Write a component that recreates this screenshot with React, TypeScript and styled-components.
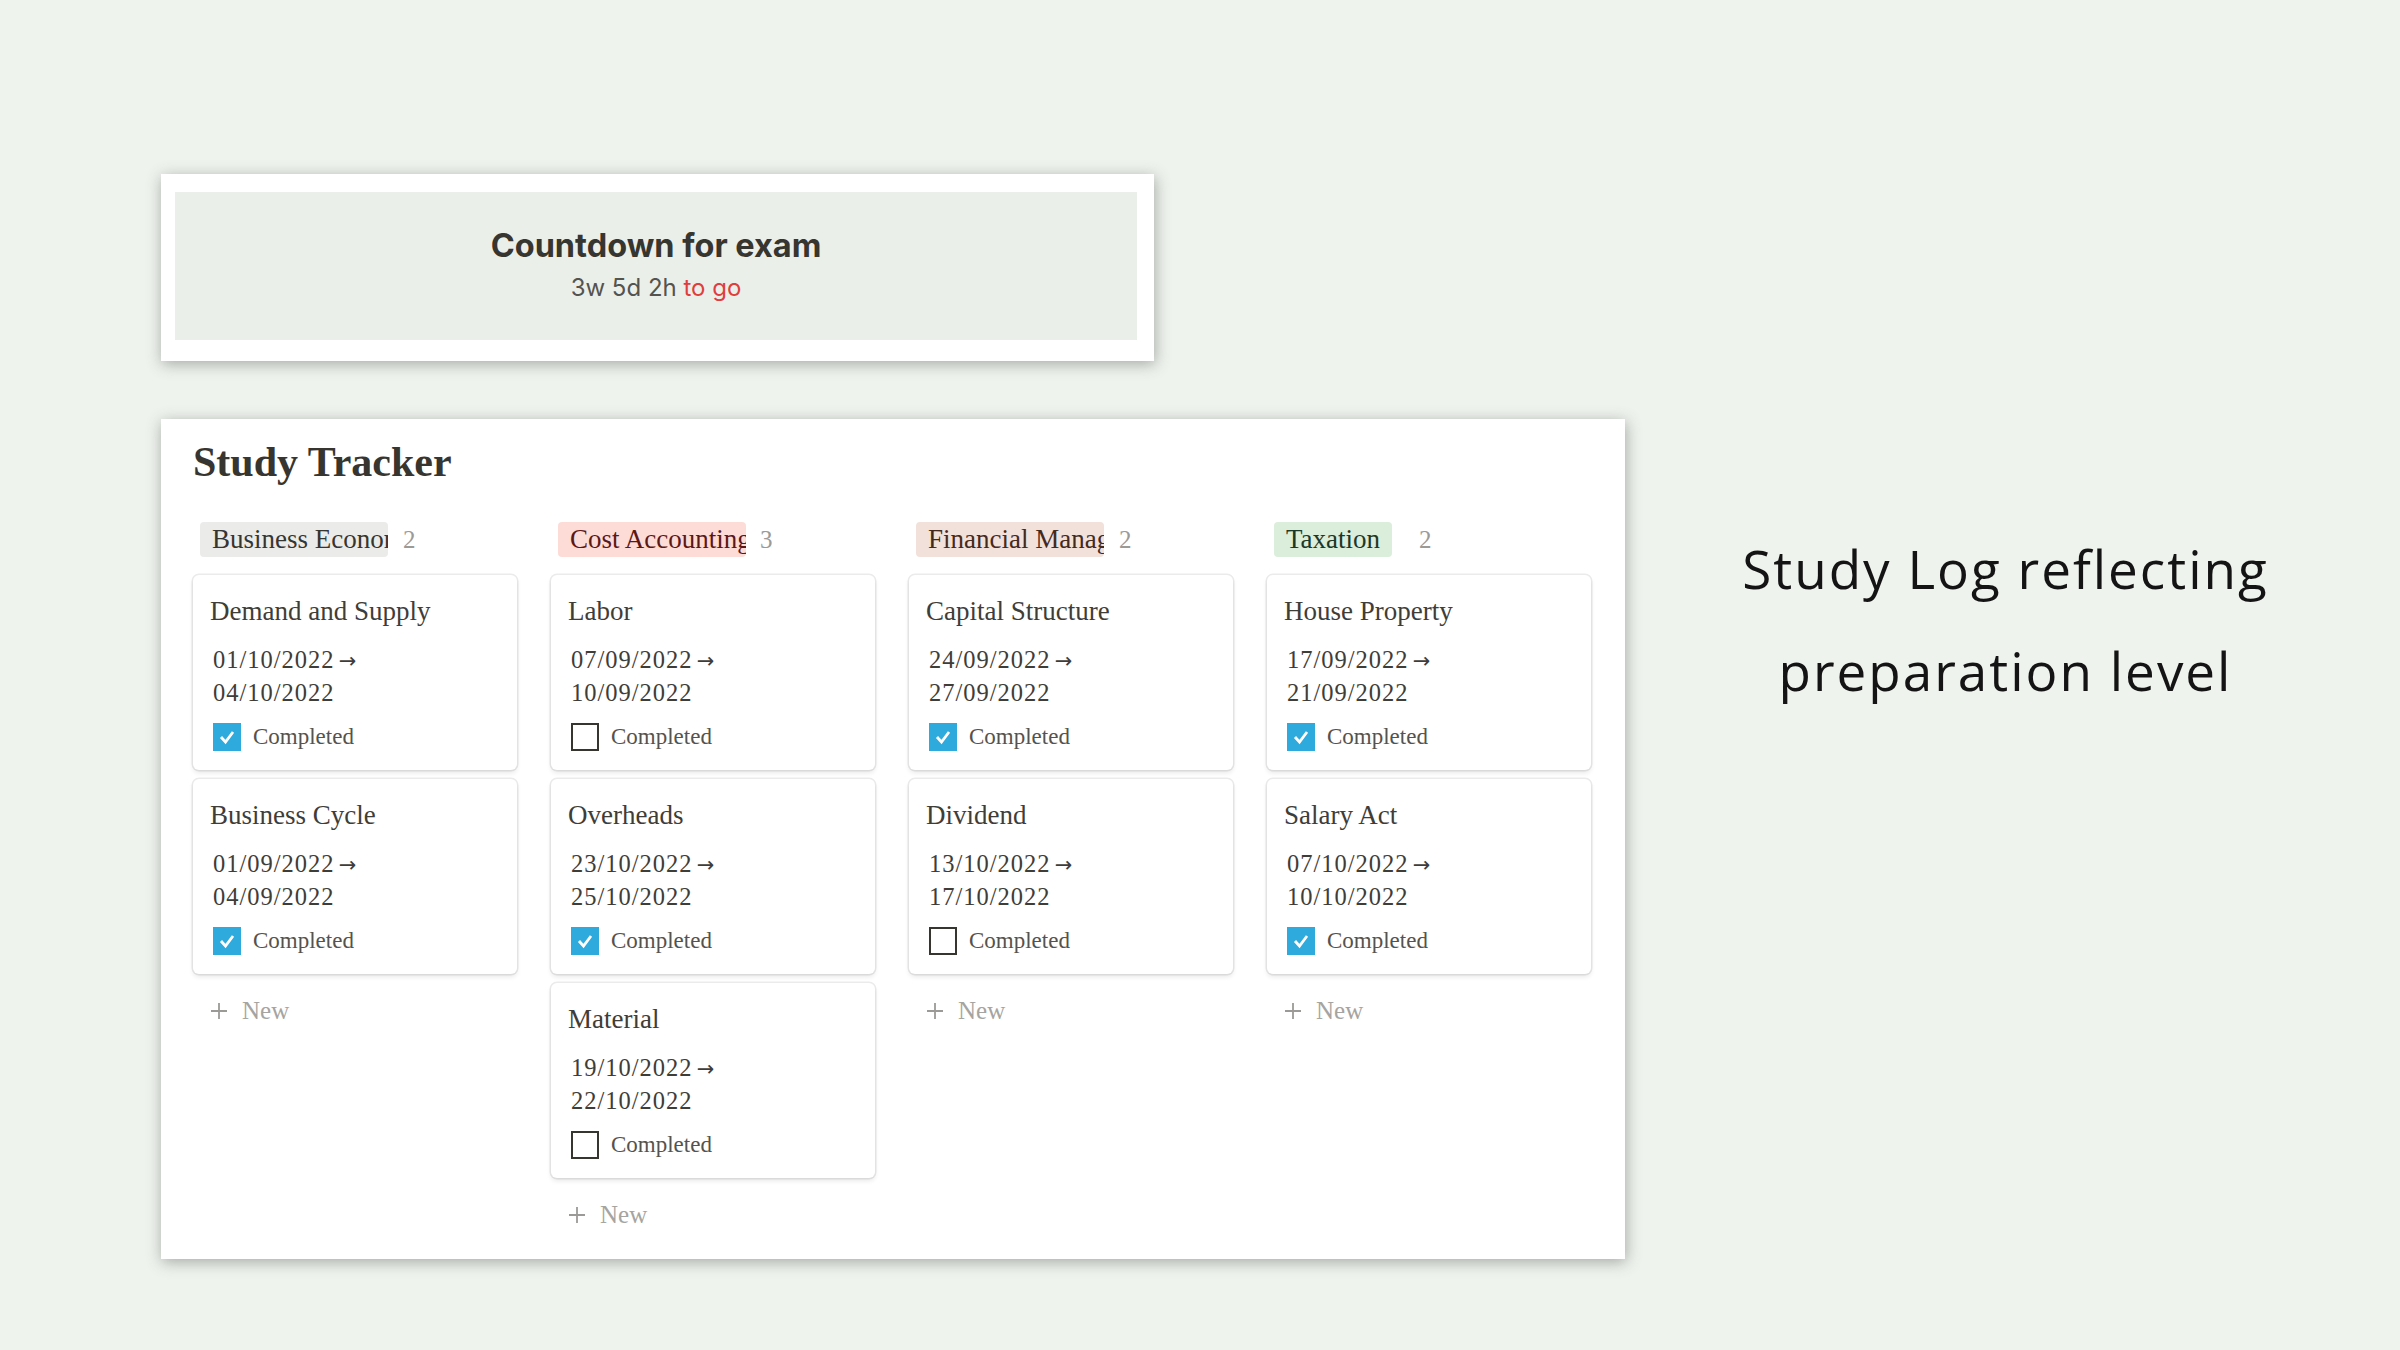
import React from 'react';
import styled, { createGlobalStyle } from 'styled-components';

type Task = { title: string; start: string; end: string; done: boolean };
type Group = {
    name: string;
    bg: string;
    fg: string;
    countGap: number;
    tasks: Task[];
};

const groups: Group[] = [
    {
        name: 'Business Economics',
        bg: '#ebebea',
        fg: '#37352f',
        countGap: 15,
        tasks: [
            { title: 'Demand and Supply', start: '01/10/2022', end: '04/10/2022', done: true },
            { title: 'Business Cycle', start: '01/09/2022', end: '04/09/2022', done: true },
        ],
    },
    {
        name: 'Cost Accounting',
        bg: '#fddcd7',
        fg: '#5d1715',
        countGap: 14,
        tasks: [
            { title: 'Labor', start: '07/09/2022', end: '10/09/2022', done: false },
            { title: 'Overheads', start: '23/10/2022', end: '25/10/2022', done: true },
            { title: 'Material', start: '19/10/2022', end: '22/10/2022', done: false },
        ],
    },
    {
        name: 'Financial Management',
        bg: '#f2e1da',
        fg: '#442a1e',
        countGap: 15,
        tasks: [
            { title: 'Capital Structure', start: '24/09/2022', end: '27/09/2022', done: true },
            { title: 'Dividend', start: '13/10/2022', end: '17/10/2022', done: false },
        ],
    },
    {
        name: 'Taxation',
        bg: '#dbeddb',
        fg: '#1c3829',
        countGap: 27,
        tasks: [
            { title: 'House Property', start: '17/09/2022', end: '21/09/2022', done: true },
            { title: 'Salary Act', start: '07/10/2022', end: '10/10/2022', done: true },
        ],
    },
];

const App = () => (
    <>
        <GlobalStyle />
        <Page>
            <LeftColumn>
                <CountdownCard>
                    <CountdownInner>
                        <CountdownTitle>Countdown for exam</CountdownTitle>
                        <CountdownValue>
                            3w 5d 2h <Red>to go</Red>
                        </CountdownValue>
                    </CountdownInner>
                </CountdownCard>

                <TrackerPanel>
                    <TrackerTitle>Study Tracker</TrackerTitle>
                    <Board>
                        {groups.map((group) => (
                            <Column key={group.name}>
                                <ColumnHeader>
                                    <Tag $bg={group.bg} $fg={group.fg}>
                                        <TagText>{group.name}</TagText>
                                    </Tag>
                                    <Count $gap={group.countGap}>{group.tasks.length}</Count>
                                </ColumnHeader>
                                <CardStack>
                                    {group.tasks.map((task) => (
                                        <Card key={task.title}>
                                            <CardTitle>{task.title}</CardTitle>
                                            <Dates>
                                                <div>
                                                    {task.start}
                                                    <Arrow>→</Arrow>
                                                </div>
                                                <div>{task.end}</div>
                                            </Dates>
                                            <CheckRow>
                                                <Checkbox $checked={task.done}>
                                                    {task.done && (
                                                        <svg width="20" height="20" viewBox="0 0 20 20">
                                                            <polyline
                                                                points="4,10 8.5,15 16,5"
                                                                fill="none"
                                                                stroke="#fff"
                                                                strokeWidth="2.8"
                                                            />
                                                        </svg>
                                                    )}
                                                </Checkbox>
                                                <CheckLabel>Completed</CheckLabel>
                                            </CheckRow>
                                        </Card>
                                    ))}
                                </CardStack>
                                <NewRow>
                                    <svg width="18" height="18" viewBox="0 0 18 18">
                                        <path d="M9 1v16M1 9h16" stroke="#9b9a97" strokeWidth="1.8" fill="none" />
                                    </svg>
                                    New
                                </NewRow>
                            </Column>
                        ))}
                    </Board>
                </TrackerPanel>
            </LeftColumn>

            <SideNote>
                Study Log reflecting
                <br />
                preparation level
            </SideNote>
        </Page>
    </>
);

const GlobalStyle = createGlobalStyle`
    body {
        margin: 0;
        background: #eff3ee;
    }
`;

const Page = styled.div`
    display: flex;
    box-sizing: border-box;
    min-height: 1350px;
    padding: 174px 0 0 161px;
`;

const LeftColumn = styled.div`
    display: flex;
    flex-direction: column;
    align-items: flex-start;
    gap: 58px;
`;

const CountdownCard = styled.div`
    box-sizing: border-box;
    width: 993px;
    padding: 18px 17px 21px 14px;
    background: #fff;
    box-shadow: 1px 3px 14px rgba(70, 80, 70, 0.45);
`;

const CountdownInner = styled.div`
    height: 148px;
    display: flex;
    flex-direction: column;
    align-items: center;
    justify-content: center;
    gap: 6px;
    padding-bottom: 2px;
    box-sizing: border-box;
    background: #ebefea;
    font-family: Inter, 'Liberation Sans', sans-serif;
`;

const CountdownTitle = styled.div`
    font-size: 32.5px;
    line-height: 40px;
    font-weight: 700;
    color: #37352f;
`;

const CountdownValue = styled.div`
    font-size: 24px;
    line-height: 32px;
    color: #55534e;
`;

const Red = styled.span`
    color: #e03e3e;
`;

const TrackerPanel = styled.div`
    box-sizing: border-box;
    width: 1464px;
    height: 840px;
    padding: 18px 35px 0 32px;
    background: #fff;
    box-shadow: 1px 3px 14px rgba(70, 80, 70, 0.45);
    font-family: 'Liberation Serif', serif;
    color: #37352f;
`;

const TrackerTitle = styled.div`
    font-size: 42px;
    line-height: 50px;
    font-weight: 700;
    margin-bottom: 35px;
`;

const Board = styled.div`
    display: grid;
    grid-template-columns: repeat(4, 324px);
    column-gap: 34px;
    align-items: start;
`;

const Column = styled.div`
    display: flex;
    flex-direction: column;
`;

const ColumnHeader = styled.div`
    display: flex;
    align-items: center;
    height: 35px;
    margin: 0 0 18px 7px;
`;

const Tag = styled.div<{ $bg: string; $fg: string }>`
    box-sizing: border-box;
    max-width: 188px;
    height: 35px;
    padding-left: 12px;
    border-radius: 4px;
    background: ${({ $bg }) => $bg};
    color: ${({ $fg }) => $fg};
    overflow: hidden;
`;

const TagText = styled.div`
    padding-right: 12px;
    font-size: 27px;
    line-height: 35px;
    white-space: nowrap;
    overflow: hidden;
`;

const Count = styled.div<{ $gap: number }>`
    margin-left: ${({ $gap }) => $gap}px;
    font-size: 25px;
    color: #9b9a97;
`;

const CardStack = styled.div`
    display: flex;
    flex-direction: column;
    gap: 9px;
`;

const Card = styled.div`
    box-sizing: border-box;
    height: 195px;
    padding: 18px 17px;
    border-radius: 6px;
    background: #fff;
    box-shadow: 0 0 0 1.5px rgba(15, 15, 15, 0.08), 0 3px 5px rgba(15, 15, 15, 0.09);
`;

const CardTitle = styled.div`
    font-size: 27px;
    line-height: 36px;
    margin-bottom: 15px;
    color: #3f3d38;
`;

const Dates = styled.div`
    padding-left: 3px;
    font-size: 24.5px;
    line-height: 32px;
    letter-spacing: 1px;
    margin-bottom: 12px;
    color: #3f3d38;
`;

const Arrow = styled.span`
    margin-left: 4px;
    font-family: 'DejaVu Sans', sans-serif;
    font-size: 21px;
    letter-spacing: 0;
`;

const CheckRow = styled.div`
    display: flex;
    align-items: center;
    height: 32px;
    padding-left: 3px;
    gap: 12px;
`;

const Checkbox = styled.div<{ $checked: boolean }>`
    box-sizing: border-box;
    width: 28px;
    height: 28px;
    display: flex;
    align-items: center;
    justify-content: center;
    background: ${({ $checked }) => ($checked ? '#2eaadc' : '#fff')};
    border: ${({ $checked }) => ($checked ? 'none' : '2.5px solid #37352f')};
`;

const CheckLabel = styled.div`
    font-size: 23px;
    color: #55534e;
`;

const NewRow = styled.div`
    display: flex;
    align-items: center;
    gap: 14px;
    height: 36px;
    margin-top: 19px;
    padding-left: 17px;
    font-size: 25px;
    color: #a5a4a1;
`;

const SideNote = styled.div`
    flex: 1;
    padding: 344px 14px 0 0;
    text-align: center;
    font-family: 'Open Sans', 'Noto Sans', sans-serif;
    font-size: 53px;
    line-height: 102px;
    letter-spacing: 2px;
    color: #141414;
`;

export default App;
